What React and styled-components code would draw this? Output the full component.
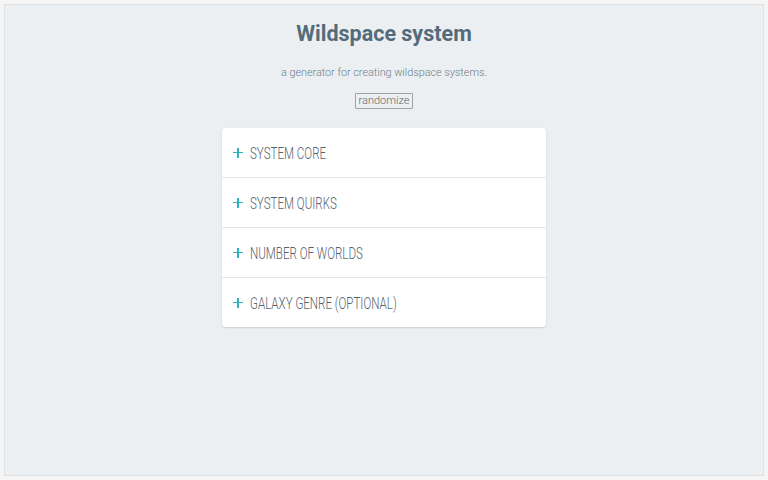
import React from 'react';
import styled, { createGlobalStyle } from 'styled-components';

const GlobalStyle = createGlobalStyle`
  html, body {
    margin: 0;
    padding: 0;
    background: #f5f5f5;
  }
  body {
    padding: 4px;
    font-family: Roboto, "Liberation Sans", sans-serif;
  }
`;

const Page = styled.div`
  box-sizing: border-box;
  height: 472px;
  background: #ebeff2;
  border: 1px solid #dfe2e4;
  display: flex;
  flex-direction: column;
  align-items: center;
  padding-top: 15px;
`;

const Title = styled.h1`
  margin: 0;
  font-size: 21.5px;
  font-weight: 700;
  color: #556b7b;
  line-height: 28px;
`;

const Subtitle = styled.p`
  margin: 18px 0 0;
  font-size: 10.8px;
  font-weight: 300;
  color: #6f7d86;
  line-height: 14px;
`;

const RandomButton = styled.button`
  margin-top: 13px;
  padding: 0 3px;
  height: 16px;
  font-family: Roboto, "Liberation Sans", sans-serif;
  font-size: 11px;
  font-weight: 300;
  color: #5f686e;
  background: transparent;
  border: 1px solid #9da3a7;
  border-radius: 1px;
  line-height: 14px;
  cursor: pointer;
`;

const Card = styled.div`
  margin-top: 19px;
  width: 324px;
  background: #fff;
  border-radius: 3px;
  box-shadow: 0 1px 2px rgba(0, 0, 0, 0.12), 0 0 1px rgba(0, 0, 0, 0.08);
`;

const Row = styled.div`
  display: flex;
  align-items: center;
  height: 49px;
  padding-left: 11px;
  border-top: ${({ $first }) => ($first ? 'none' : '1px solid #e3e6e8')};
  cursor: pointer;
`;

const Plus = styled.span`
  flex: none;
  width: 10px;
  height: 10px;
  margin-right: 7px;
  position: relative;
  &::before,
  &::after {
    content: '';
    position: absolute;
    background: #2fb0bd;
  }
  &::before {
    left: 0;
    top: 4.5px;
    width: 10px;
    height: 1.2px;
  }
  &::after {
    left: 4.4px;
    top: 0;
    width: 1.2px;
    height: 10px;
  }
`;

// condensed look: no narrow face installed, so squeeze Roboto Light
const Label = styled.span`
  display: inline-block;
  font-family: Roboto, "Liberation Sans", sans-serif;
  font-weight: 300;
  font-size: 17px;
  color: #56636d;
  text-transform: uppercase;
  white-space: nowrap;
  transform: scaleX(0.68);
  transform-origin: left center;
`;

const sections = ['System core', 'System quirks', 'Number of worlds', 'Galaxy genre (optional)'];

const App = () => {
  return (
    <>
      <GlobalStyle />
      <Page>
        <Title>Wildspace system</Title>
        <Subtitle>a generator for creating wildspace systems.</Subtitle>
        <RandomButton>randomize</RandomButton>
        <Card>
          {sections.map((s, i) => (
            <Row key={s} $first={i === 0}>
              <Plus />
              <Label>{s}</Label>
            </Row>
          ))}
        </Card>
      </Page>
    </>
  );
};

export default App;
